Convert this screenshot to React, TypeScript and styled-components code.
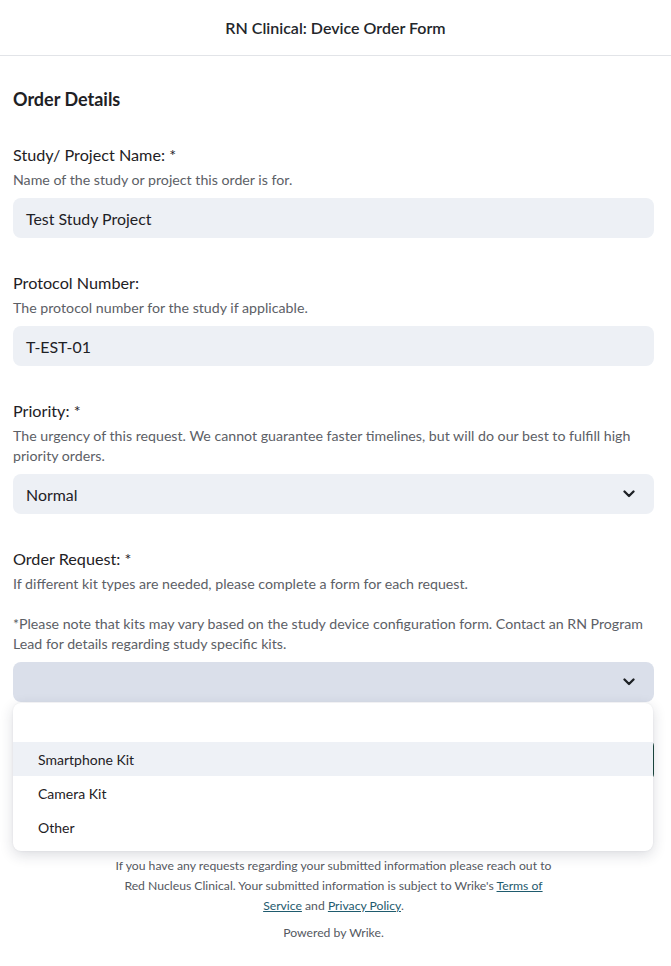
import React from "react";
import styled, { createGlobalStyle } from "styled-components";

const GlobalStyle = createGlobalStyle`
  html, body { margin: 0; padding: 0; background: #ffffff; }
  body { font-family: Lato, "Open Sans", "Noto Sans", sans-serif; color: #1e2125; }
  * { box-sizing: border-box; }
`;

const Page = styled.div`
  width: 671px;
  min-height: 966px;
  background: #fff;
`;

const Header = styled.header`
  height: 56px;
  display: flex;
  align-items: center;
  justify-content: center;
  border-bottom: 1px solid #e2e4e8;
`;

const Title = styled.h1`
  margin: 0;
  font-size: 16px;
  font-weight: 600;
  color: #23262b;
`;

const Main = styled.main`
  padding: 31px 17px 0 13px;
  display: flex;
  flex-direction: column;
`;

const SectionTitle = styled.h2`
  margin: 0 0 34px;
  font-size: 18px;
  line-height: 24px;
  font-weight: 700;
  color: #1e2125;
`;

const Field = styled.div<{ last?: boolean }>`
  display: flex;
  flex-direction: column;
  margin-bottom: ${(p) => (p.last ? "0" : "35px")};
`;

const Label = styled.label`
  font-size: 16.2px;
  line-height: 20px;
  color: #1e2125;
  margin-bottom: 5px;
`;

const Description = styled.p`
  margin: 0;
  font-size: 14.2px;
  line-height: 20px;
  color: #5c6066;
`;

const Spacer = styled.div`
  height: 20px;
`;

const Control = styled.div<{ focused?: boolean }>`
  position: relative;
  margin-top: 8px;
  height: 40px;
  border-radius: 8px;
  background: ${(p) => (p.focused ? "#dadfea" : "#edf0f5")};
  display: flex;
  align-items: center;
  justify-content: space-between;
  padding: 0 19px 0 13px;
  font-size: 15.9px;
  color: #1e2125;
`;

const Chevron = () => (
  <svg width="12" height="8" viewBox="0 0 12 8" fill="none">
    <path d="M1.5 1.5 6 6l4.5-4.5" stroke="#1e2125" strokeWidth="2.3" strokeLinecap="round" strokeLinejoin="round" />
  </svg>
);

const Menu = styled.ul`
  position: absolute;
  top: 41px;
  left: 0;
  right: 1px;
  z-index: 5;
  margin: 0;
  padding: 5px 0 7px;
  list-style: none;
  background: #fff;
  border-radius: 8px;
  box-shadow: 0 4px 14px rgba(30, 40, 60, 0.16), 0 0 2px rgba(30, 40, 60, 0.08);
`;

const MenuItem = styled.li<{ active?: boolean }>`
  height: 34px;
  display: flex;
  align-items: center;
  padding: 0 25px;
  font-size: 14px;
  color: #1e2125;
  background: ${(p) => (p.active ? "#eef1f6" : "transparent")};
`;

const SubmitButton = styled.button`
  margin-top: 38px;
  height: 40px;
  border: none;
  border-radius: 6px;
  background: #1c4a3e;
  color: #fff;
  font-family: inherit;
  font-size: 15px;
  font-weight: 700;
`;

const Footer = styled.footer`
  margin: 76px auto 0;
  width: 470px;
  text-align: center;
  font-size: 12.2px;
  line-height: 20px;
  color: #55595f;
`;

const FooterText = styled.p`
  margin: 0;
`;

const Powered = styled.p`
  margin: 7px 0 0;
`;

const Link = styled.a`
  color: #1f5b6e;
  text-decoration: underline;
`;

export default function App() {
  return (
    <Page>
      <GlobalStyle />
      <Header>
        <Title>RN Clinical: Device Order Form</Title>
      </Header>
      <Main>
        <SectionTitle>Order Details</SectionTitle>

        <Field>
          <Label>Study/ Project Name: *</Label>
          <Description>Name of the study or project this order is for.</Description>
          <Control>Test Study Project</Control>
        </Field>

        <Field>
          <Label>Protocol Number:</Label>
          <Description>The protocol number for the study if applicable.</Description>
          <Control>T-EST-01</Control>
        </Field>

        <Field>
          <Label>Priority: *</Label>
          <Description>
            The urgency of this request. We cannot guarantee faster timelines, but will do our best to fulfill high
            priority orders.
          </Description>
          <Control>
            <span>Normal</span>
            <Chevron />
          </Control>
        </Field>

        <Field last>
          <Label>Order Request: *</Label>
          <Description>If different kit types are needed, please complete a form for each request.</Description>
          <Spacer />
          <Description>
            *Please note that kits may vary based on the study device configuration form. Contact an RN Program
            Lead for details regarding study specific kits.
          </Description>
          <Control focused>
            <span />
            <Chevron />
            <Menu>
              <MenuItem />
              <MenuItem active>Smartphone Kit</MenuItem>
              <MenuItem>Camera Kit</MenuItem>
              <MenuItem>Other</MenuItem>
            </Menu>
          </Control>
        </Field>

        <SubmitButton>Submit</SubmitButton>

        <Footer>
          <FooterText>
            If you have any requests regarding your submitted information please reach out to
            <br />
            Red Nucleus Clinical. Your submitted information is subject to Wrike's <Link href="#">Terms of
            <br />
            Service</Link> and <Link href="#">Privacy Policy</Link>.
          </FooterText>
          <Powered>Powered by Wrike.</Powered>
        </Footer>
      </Main>
    </Page>
  );
}
